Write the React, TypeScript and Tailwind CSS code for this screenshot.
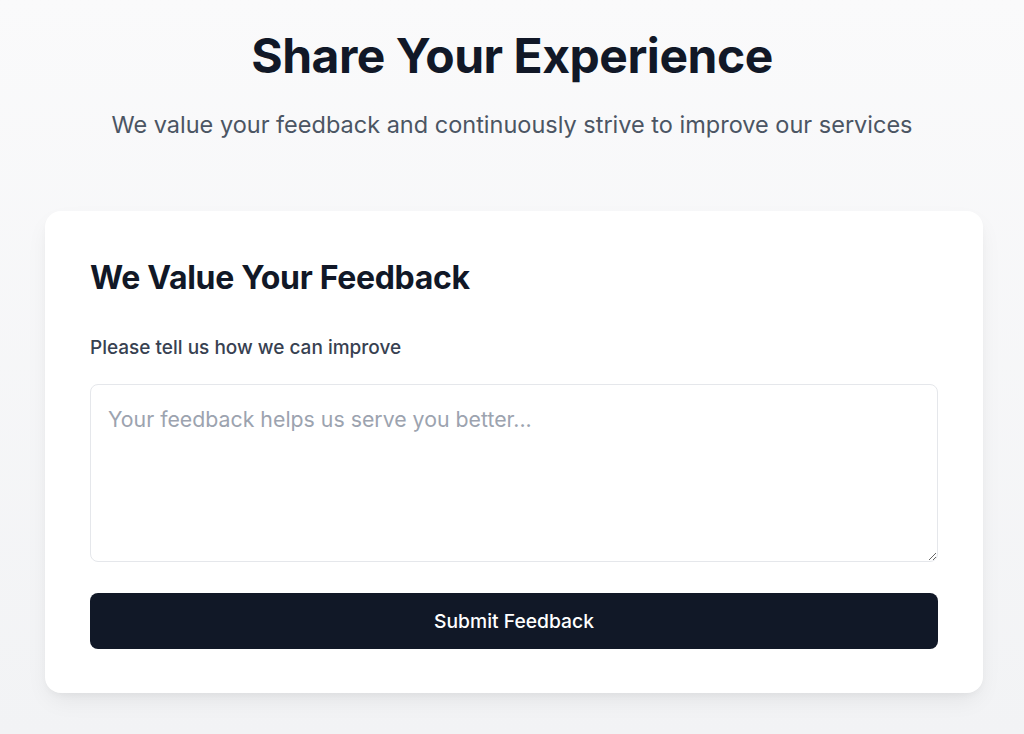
import { useState } from "react";

export default function App() {
  const [feedback, setFeedback] = useState("");

  return (
    <div className="min-h-screen w-full bg-gradient-to-b from-[#fafafb] to-[#f2f3f5] font-['Inter',sans-serif]">
      <div className="mx-auto flex w-full max-w-[938px] flex-col items-center pt-[26px]">
        <h1 className="text-[48px] font-bold leading-[60px] tracking-[-0.01em] text-[#111827]">
          Share Your Experience
        </h1>
        <p className="mt-[24px] text-[23.5px] leading-[30px] text-[#4b5563]">
          We value your feedback and continuously strive to improve our services
        </p>
      </div>

      <div className="ml-[45px] mt-[71px] w-[938px] rounded-2xl bg-white px-[45px] pt-[47px] pb-[44px] shadow-[0_10px_25px_-5px_rgba(0,0,0,0.08),0_4px_10px_-4px_rgba(0,0,0,0.06)]">
        <h2 className="text-[32px] font-bold leading-[40px] tracking-[-0.01em] text-[#111827]">
          We Value Your Feedback
        </h2>
        <label
          htmlFor="feedback"
          className="mt-[37px] block text-[19px] font-medium leading-[26px] text-[#374151]"
        >
          Please tell us how we can improve
        </label>
        <textarea
          id="feedback"
          value={feedback}
          onChange={(e) => setFeedback(e.target.value)}
          placeholder="Your feedback helps us serve you better..."
          className="mt-[23px] block h-[178px] w-full resize-y rounded-lg border border-[#e5e7eb] px-[17px] py-[20px] text-[21.3px] leading-[28px] text-[#111827] placeholder:text-[#9ca3af] focus:outline-none"
        />
        <button
          type="button"
          className="mt-[31px] flex h-[56px] w-full items-center justify-center rounded-lg bg-[#111827] text-[19.3px] font-medium text-white"
        >
          Submit Feedback
        </button>
      </div>
    </div>
  );
}
